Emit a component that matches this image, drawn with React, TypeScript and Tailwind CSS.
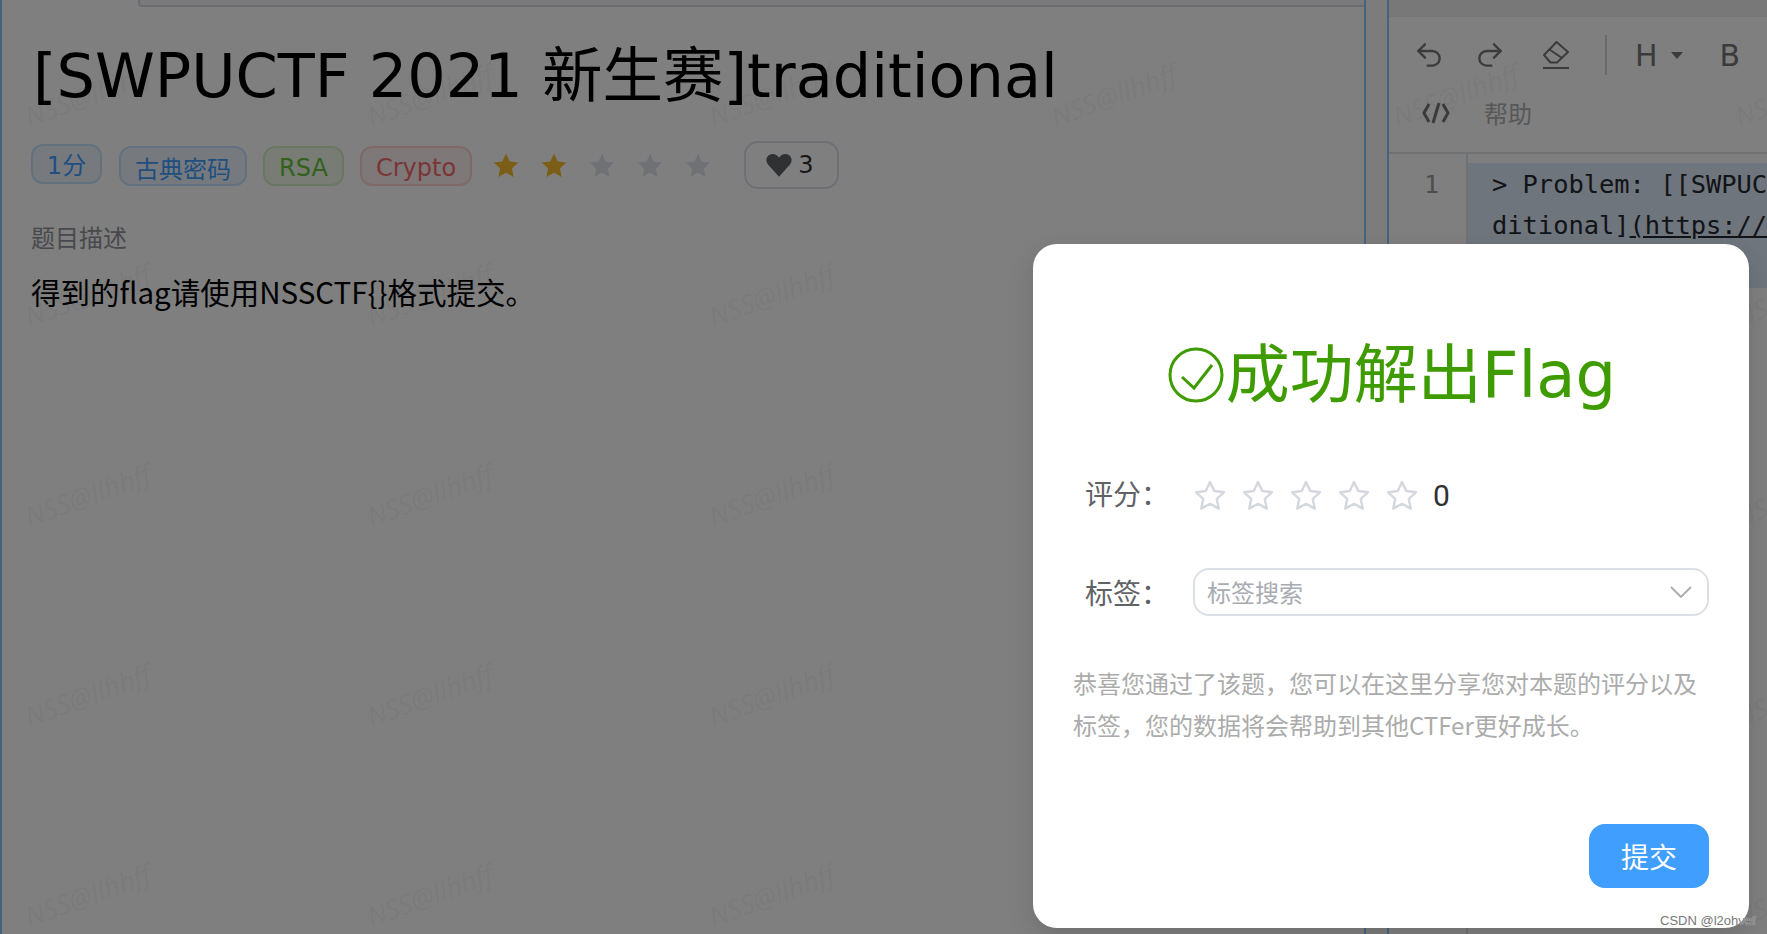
import { Redo2, Undo2 } from 'lucide-react';

const cjk = "font-['Noto_Sans_CJK_SC',sans-serif]";

function Star({ className, hollow }: { className: string; hollow?: boolean }) {
  return (
    <svg viewBox="0 0 32 30" className={className}>
      <polygon
        points="16,2 20.2,11 30,12.2 22.8,19 24.7,28.6 16,23.8 7.3,28.6 9.2,19 2,12.2 11.8,11"
        fill={hollow ? 'none' : 'currentColor'}
        stroke={hollow ? 'currentColor' : 'none'}
        strokeWidth="2.4"
        strokeLinejoin="round"
      />
    </svg>
  );
}

function Tag({ text, className }: { text: string; className: string }) {
  return (
    <span className={`flex h-10 items-center justify-center rounded-[12px] border-2 pt-[3px] text-[24px] ${className}`}>
      {text}
    </span>
  );
}

function ToolbarIcons() {
  return (
    <div className="flex h-[46px] items-center pl-[24px] text-[#777777]">
      <Undo2 className="h-[32px] w-[32px]" strokeWidth={1.8} />
      <Redo2 className="ml-[29px] h-[32px] w-[32px]" strokeWidth={1.8} />
      <svg viewBox="0 0 28 30" className="ml-[36px] h-[30px] w-[28px]" fill="none" stroke="currentColor" strokeWidth="2">
        <path d="M2 15 14.5 2 26 12 15 22.5H8.5Z" strokeLinejoin="round" />
        <path d="M7.5 9.5 20 18" />
        <path d="M1 28H27" />
      </svg>
      <div className="ml-[35px] h-10 w-[2px] bg-[#d4d4d4]" />
      <span className="ml-[28px] font-['DejaVu_Sans',sans-serif] text-[30px]">H</span>
      <svg viewBox="0 0 12 7" className="ml-[13px] h-[7px] w-[12px]">
        <polygon points="0,0 12,0 6,7" fill="currentColor" />
      </svg>
      <span className="ml-[37px] font-['DejaVu_Sans',sans-serif] text-[30px]">B</span>
    </div>
  );
}

export default function App() {
  const watermarks = Array.from({ length: 30 });

  return (
    <div className="relative h-[934px] w-[1767px] overflow-hidden bg-white font-['DejaVu_Sans','Noto_Sans_CJK_SC',sans-serif]">
      <div className="flex h-full">
        {/* problem panel */}
        <div className="h-full w-[1366px] shrink-0 border-x-2 border-[#8ec4fe] pl-[29px]">
          <div className="ml-[107px] h-[7px] rounded-bl-[4px] border-b-2 border-l-2 border-[#d8dbe2] bg-[#f4f5f8]" />
          <h1 className="mt-[29px] ml-[2px] text-[60.5px] leading-[80px] whitespace-nowrap text-black">
            [SWPUCTF 2021 新生赛]traditional
          </h1>
          <div className="mt-[25px] flex h-12 items-center">
            <Tag text="1分" className="w-[71px] -translate-y-[1px] border-[#c6e2ff] bg-[#ecf5ff] text-[#409eff]" />
            <Tag text="古典密码" className={`ml-[17px] w-[128px] translate-y-[1px] border-[#c6e2ff] bg-[#ecf5ff] text-[#409eff] ${cjk}`} />
            <Tag text="RSA" className="ml-[16px] w-[81px] translate-y-[1px] border-[#d1edc4] bg-[#f0f9eb] text-[#67c23a]" />
            <Tag text="Crypto" className="ml-[16px] w-[112px] translate-y-[1px] border-[#fcd3d3] bg-[#fef0f0] text-[#f56c6c]" />
            <div className="ml-[20px] flex gap-[20px]">
              <Star className="h-[28px] w-[28px] text-[#f7ba2a]" />
              <Star className="h-[28px] w-[28px] text-[#f7ba2a]" />
              <Star className="h-[28px] w-[28px] text-[#e0e3ea]" />
              <Star className="h-[28px] w-[28px] text-[#e0e3ea]" />
              <Star className="h-[28px] w-[28px] text-[#e0e3ea]" />
            </div>
            <div className="ml-[32px] flex h-12 w-[95px] items-center justify-center gap-[5px] rounded-[14px] border-2 border-[#dcdfe6] pr-[4px] text-[24px] text-[#303133]">
              <svg viewBox="0 0 24 24" className="h-[28px] w-[28px] text-[#606266]">
                <path fill="currentColor" d="M12 22 2.6 11.6C-.6 7.6 2 2.6 6.6 2.6c2.2 0 4.2 1.2 5.4 3.2 1.2-2 3.2-3.2 5.4-3.2 4.6 0 7.2 5 4 9Z" />
              </svg>
              3
            </div>
          </div>
          <p className={`mt-[32px] text-[24px] leading-[32px] text-[#909399] ${cjk}`}>题目描述</p>
          <p className={`mt-[18px] text-[29.5px] leading-[40px] text-black ${cjk}`}>得到的flag请使用NSSCTF{'{}'}格式提交。</p>
        </div>

        <div className="h-full w-[21px] shrink-0 bg-[#f8f8f8]" />

        {/* markdown editor */}
        <div className="h-full flex-1 overflow-hidden border-l-2 border-[#8ec4fe]">
          <div className="h-[17px] bg-[#f0f0f0]" />
          <div className="h-[137px] border-b-2 border-[#e1e4e8] pt-[15px]">
            <ToolbarIcons />
            <div className="mt-[18px] flex items-center pl-[33px]">
              <svg viewBox="0 0 28 24" className="h-[24px] w-[28px] text-[#777777]" fill="none" stroke="currentColor" strokeWidth="3">
                <path d="M7 3 2 12 7 21M21 3 26 12 21 21M17 2 11 22" />
              </svg>
              <span className={`ml-[34px] text-[24px] leading-[34px] text-[#b0b0b0] ${cjk}`}>帮助</span>
            </div>
          </div>
          <div className="flex h-full">
            <div className="w-[79px] shrink-0 border-r-2 border-[#e1e4e8] pt-[10px] pr-[27px] text-right font-['DejaVu_Sans_Mono',monospace] text-[25px] leading-[41px] text-[#9a9a9a]">
              1
            </div>
            <div className="mt-[9px] h-[125px] flex-1 bg-[#dfeafa] pt-[1px] pl-[24px] font-['DejaVu_Sans_Mono',monospace] text-[25.4px] leading-[41px] whitespace-nowrap text-[#24292e]">
              <div>&gt; Problem: [[SWPUCTF 2021 新生赛]tra</div>
              <div>
                ditional]<span className="underline">(https://www.nssctf.cn</span>
              </div>
            </div>
          </div>
        </div>
      </div>

      {/* watermark layer */}
      <div className="pointer-events-none absolute -top-[5px] -left-[83px] grid grid-cols-[repeat(6,342px)] grid-rows-[repeat(5,200px)]">
        {watermarks.map((_, i) => (
          <div key={i} className="flex items-center justify-center">
            <span className="-rotate-[20deg] font-['Noto_Sans',sans-serif] text-[27px] text-black/[0.05] italic">NSS@llhhff</span>
          </div>
        ))}
      </div>

      {/* overlay */}
      <div className="absolute inset-0 bg-black/50" />

      {/* dialog */}
      <div className={`absolute top-[244px] left-[1033px] h-[684px] w-[716px] rounded-[24px] bg-white shadow-[0_12px_32px_4px_rgba(0,0,0,0.04),0_8px_20px_rgba(0,0,0,0.08)] ${cjk}`}>
        <div className="flex items-center justify-center pt-[91px] pl-[2px] text-[#3f9c00]">
          <svg viewBox="0 0 56 56" className="mr-[2px] h-[56px] w-[56px]" fill="none" stroke="currentColor" strokeWidth="3">
            <circle cx="28" cy="28" r="26" />
            <path d="M14 30 26 41 44 18" />
          </svg>
          <span className="font-['DejaVu_Sans','Noto_Sans_CJK_SC',sans-serif] text-[64px] leading-[80px]">成功解出Flag</span>
        </div>
        <div className="mt-[56px] flex h-12 items-center pl-[52px]">
          <span className="w-[109px] -translate-y-[2px] text-[28px] text-[#606266]">评分：</span>
          <div className="flex gap-[16px] text-[#d4d7de]">
            <Star hollow className="h-[32px] w-[32px]" />
            <Star hollow className="h-[32px] w-[32px]" />
            <Star hollow className="h-[32px] w-[32px]" />
            <Star hollow className="h-[32px] w-[32px]" />
            <Star hollow className="h-[32px] w-[32px]" />
          </div>
          <span className="ml-[15px] font-['Roboto',sans-serif] text-[30px] text-[#303133]">0</span>
        </div>
        <div className="mt-[49px] flex h-12 items-center pl-[52px]">
          <span className="w-[108px] text-[28px] text-[#606266]">标签：</span>
          <div className="flex h-12 w-[516px] items-center justify-between rounded-[16px] border-2 border-[#dcdfe6] pr-[15px] pl-[12px]">
            <span className="text-[24px] text-[#a8abb2]">标签搜索</span>
            <svg viewBox="0 0 22 12" className="h-[12px] w-[22px] text-[#a8abb2]" fill="none" stroke="currentColor" strokeWidth="1.8">
              <path d="M1 1 11 11 21 1" />
            </svg>
          </div>
        </div>
        <p className="mt-[46px] box-content w-[640px] pl-[40px] text-[24px] leading-[42px] text-[#ababab]">
          恭喜您通过了该题，您可以在这里分享您对本题的评分以及标签，您的数据将会帮助到其他CTFer更好成长。
        </p>
      </div>

      <button className={`absolute top-[824px] left-[1589px] h-16 w-[120px] rounded-[16px] bg-[#409eff] text-[28px] text-white ${cjk}`}>
        提交
      </button>

      <span className="absolute top-[911px] left-[1660px] font-['Liberation_Sans',sans-serif] text-[13px] text-[#777777] [text-shadow:0_0_1px_#ffffff]">CSDN @l2ohvef</span>
    </div>
  );
}
